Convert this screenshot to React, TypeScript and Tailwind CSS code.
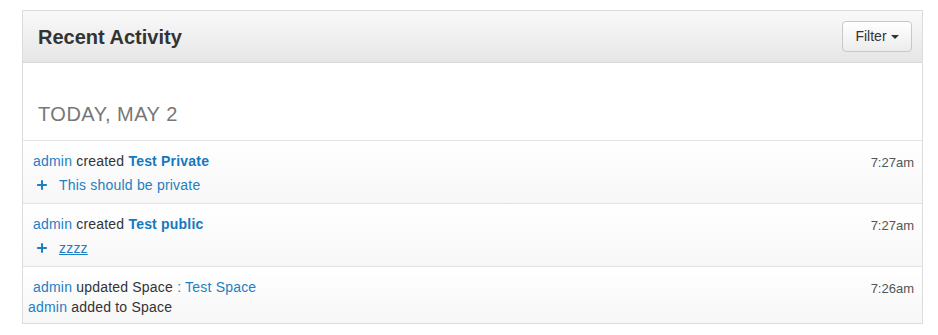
import { Plus } from 'lucide-react';

type Row = {
    user: string;
    verb: string;
    target: string;
    targetBold?: boolean;
    prefix?: string;
    note?: string;
    noteUnderline?: boolean;
    extra?: string;
    time: string;
};

const rows: Row[] = [
    { user: 'admin', verb: 'created', target: 'Test Private', targetBold: true, note: 'This should be private', time: '7:27am' },
    { user: 'admin', verb: 'created', target: 'Test public', targetBold: true, note: 'zzzz', noteUnderline: true, time: '7:27am' },
    { user: 'admin', verb: 'updated Space', prefix: ':', target: 'Test Space', extra: 'added to Space', time: '7:26am' },
];

const ActivityRow = ({ row }: { row: Row }) => (
    <div className={`${row.extra ? 'h-[57px]' : 'h-[63px]'} border-t border-[#e3e3e3] bg-gradient-to-b from-white to-[#f7f7f7] relative`}>
        <div className="absolute right-[8px] top-[12px] text-[13px] text-[#555]">{row.time}</div>
        <div className="pl-[10px] pt-[10px] text-[14px] leading-[20px] tracking-[0.2px] text-[#333]">
            <a className="text-[#1d7fc4]">{row.user}</a> {row.verb}{' '}
            {row.prefix && <span className="text-[#1d7fc4]">{row.prefix} </span>}
            <a className={row.targetBold ? 'font-bold text-[#1379c0]' : 'text-[#1d7fc4]'}>{row.target}</a>
        </div>
        {row.note && (
            <div className="pl-[12px] mt-[4px] flex items-center text-[14px] leading-[20px] tracking-[0.2px]">
                <Plus size={14} strokeWidth={3.5} className="text-[#1d7fc4]" />
                <a className={`ml-[10px] text-[#1d7fc4] ${row.noteUnderline ? 'underline' : ''}`}>{row.note}</a>
            </div>
        )}
        {row.extra && (
            <div className="pl-[5px] text-[14px] leading-[20px] tracking-[0.2px] text-[#333]">
                <a className="text-[#1d7fc4]">{row.user}</a> {row.extra}
            </div>
        )}
    </div>
);

export default function App() {
    return (
        <div className="w-[938px] h-[335px] bg-white pt-[10px] pl-[22px] font-['Liberation_Sans',Arial,sans-serif]">
            <div className="w-[901px] border border-[#dcdcdc]">
                {/* Header */}
                <div className="h-[52px] flex items-center justify-between pl-[15px] pr-[10px] bg-gradient-to-b from-[#f9f9f9] to-[#e6e6e6] border-b border-[#d8d8d8]">
                    <h2 className="text-[20px] font-bold text-[#333]">Recent Activity</h2>
                    <button className="h-[31px] w-[70px] flex items-center justify-center gap-[4px] rounded-[4px] border border-[#c8c8c8] bg-gradient-to-b from-white to-[#ececec] text-[14px] text-[#333]">
                        Filter
                        <span className="inline-block w-0 h-0 border-l-[4px] border-r-[4px] border-t-[4px] border-l-transparent border-r-transparent border-t-[#333]" />
                    </button>
                </div>

                {/* Date */}
                <div className="h-[77px] flex items-end pl-[15px] pb-[14px]">
                    <h3 className="text-[20px] leading-[24px] tracking-[0.5px] text-[#777] uppercase">Today, May 2</h3>
                </div>

                {rows.map((row, i) => (
                    <ActivityRow key={i} row={row} />
                ))}
            </div>
        </div>
    );
}
